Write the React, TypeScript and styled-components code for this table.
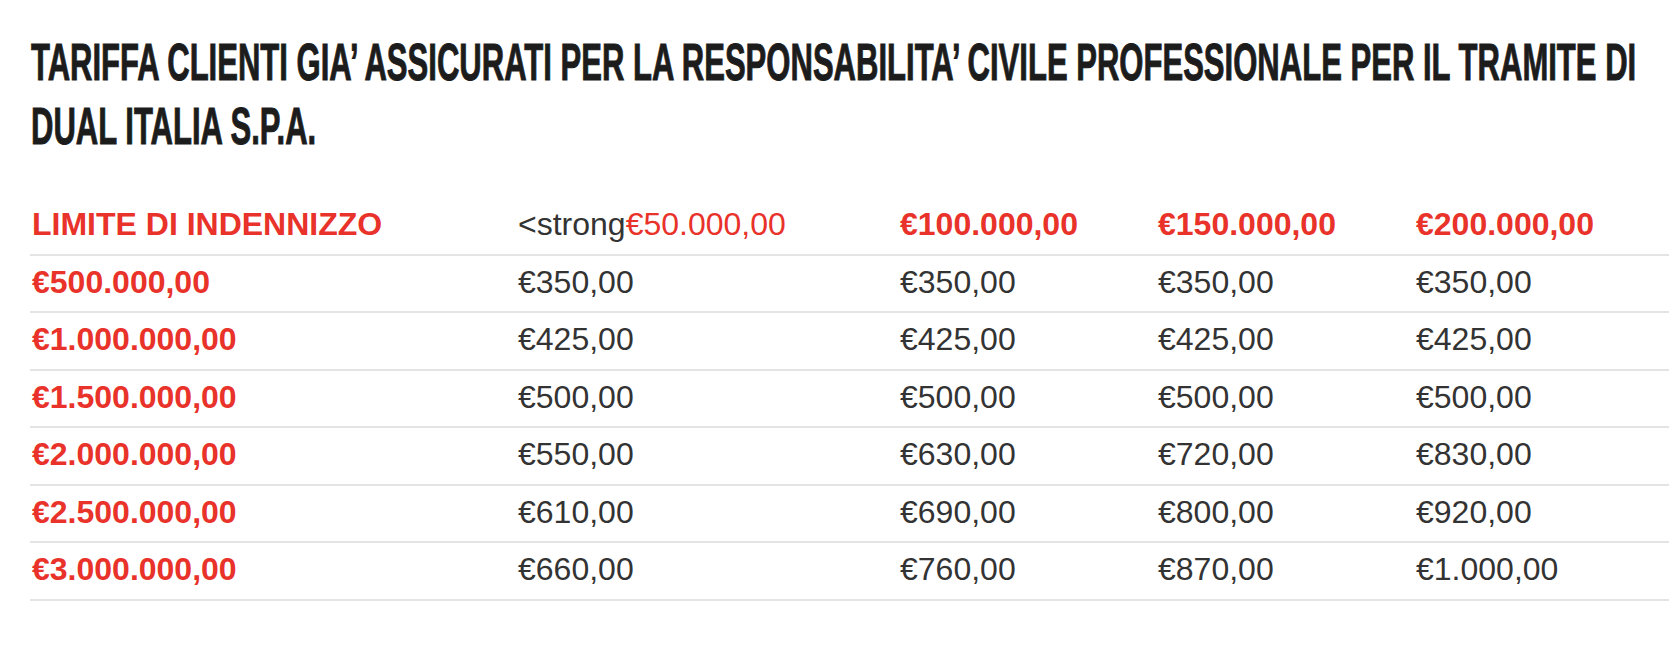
import React from 'react';
import styled, { createGlobalStyle } from 'styled-components';

const GlobalStyle = createGlobalStyle`
  html, body {
    margin: 0;
    padding: 0;
    background: #ffffff;
  }
  body {
    font-family: "Liberation Sans", Arial, sans-serif;
    color: #333333;
  }
`;

const RED = '#e8322a';
const TITLE_SCALE = 0.597;

const Page = styled.div`
  padding: 30px 9px 40px 30px;
  overflow: hidden;
`;

const TitleBox = styled.div`
  overflow: hidden;
  margin-bottom: 40px;
`;

const Title = styled.h2`
  width: calc(100% / ${TITLE_SCALE});
  margin: 0 0 0 1px;
  transform: scaleX(${TITLE_SCALE});
  transform-origin: left top;
  font-family: "Liberation Sans", Arial, sans-serif;
  font-size: 52px;
  line-height: 64px;
  font-weight: 700;
  text-transform: uppercase;
  color: #1c1c1c;
  -webkit-text-stroke: 1px #1c1c1c;
`;

const Table = styled.table`
  width: 100%;
  border-collapse: collapse;
  table-layout: fixed;
  font-size: 32px;
  line-height: 48px;
`;

const Col = styled.col<{ $w: number }>`
  width: ${(p) => p.$w}px;
`;

const Cell = styled.td<{ $red?: boolean; $bold?: boolean }>`
  padding: 2px 2px 5.5px 2px;
  border-bottom: 2px solid #e4e4e4;
  text-align: left;
  vertical-align: middle;
  white-space: nowrap;
  color: ${(p) => (p.$red ? RED : '#333333')};
  font-weight: ${(p) => (p.$bold ? 700 : 400)};
`;

const RedText = styled.span`
  color: ${RED};
`;

const limits = ['€100.000,00', '€150.000,00', '€200.000,00'];

const rows: { limit: string; prices: string[] }[] = [
  { limit: '€500.000,00', prices: ['€350,00', '€350,00', '€350,00', '€350,00'] },
  { limit: '€1.000.000,00', prices: ['€425,00', '€425,00', '€425,00', '€425,00'] },
  { limit: '€1.500.000,00', prices: ['€500,00', '€500,00', '€500,00', '€500,00'] },
  { limit: '€2.000.000,00', prices: ['€550,00', '€630,00', '€720,00', '€830,00'] },
  { limit: '€2.500.000,00', prices: ['€610,00', '€690,00', '€800,00', '€920,00'] },
  { limit: '€3.000.000,00', prices: ['€660,00', '€760,00', '€870,00', '€1.000,00'] },
];

const App: React.FC = () => {
  return (
    <Page>
      <GlobalStyle />
      <TitleBox>
        <Title>
          Tariffa clienti gia’ assicurati per la responsabilita’ civile professionale per il tramite di
          Dual Italia S.p.A.
        </Title>
      </TitleBox>
      <Table>
        <colgroup>
          <Col $w={486} />
          <Col $w={382} />
          <Col $w={258} />
          <Col $w={258} />
          <Col $w={255} />
        </colgroup>
        <tbody>
          <tr>
            <Cell $red $bold>LIMITE DI INDENNIZZO</Cell>
            <Cell>
              &lt;strong<RedText>€50.000,00</RedText>
            </Cell>
            {limits.map((l) => (
              <Cell key={l} $red $bold>{l}</Cell>
            ))}
          </tr>
          {rows.map((row) => (
            <tr key={row.limit}>
              <Cell $red $bold>{row.limit}</Cell>
              {row.prices.map((p, i) => (
                <Cell key={i}>{p}</Cell>
              ))}
            </tr>
          ))}
        </tbody>
      </Table>
    </Page>
  );
};

export default App;
